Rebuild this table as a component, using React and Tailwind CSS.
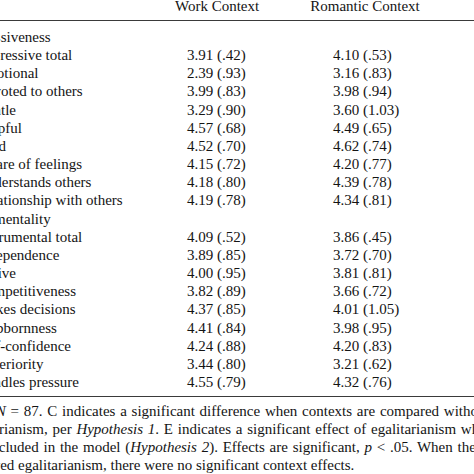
import React from "react";

const rows = [
  { label: "Expressiveness", head: true },
  { label: "Expressive total", work: "3.91 (.42)", rom: "4.10 (.53)" },
  { label: "Emotional", work: "2.39 (.93)", rom: "3.16 (.83)" },
  { label: "Devoted to others", work: "3.99 (.83)", rom: "3.98 (.94)" },
  { label: "Gentle", work: "3.29 (.90)", rom: "3.60 (1.03)" },
  { label: "Helpful", work: "4.57 (.68)", rom: "4.49 (.65)" },
  { label: "Kind", work: "4.52 (.70)", rom: "4.62 (.74)" },
  { label: "Aware of feelings", work: "4.15 (.72)", rom: "4.20 (.77)" },
  { label: "Understands others", work: "4.18 (.80)", rom: "4.39 (.78)" },
  { label: "Relationship with others", work: "4.19 (.78)", rom: "4.34 (.81)" },
  { label: "Instrumentality", head: true },
  { label: "Instrumental total", work: "4.09 (.52)", rom: "3.86 (.45)" },
  { label: "Independence", work: "3.89 (.85)", rom: "3.72 (.70)" },
  { label: "Active", work: "4.00 (.95)", rom: "3.81 (.81)" },
  { label: "Competitiveness", work: "3.82 (.89)", rom: "3.66 (.72)" },
  { label: "Makes decisions", work: "4.37 (.85)", rom: "4.01 (1.05)" },
  { label: "Stubbornness", work: "4.41 (.84)", rom: "3.98 (.95)" },
  { label: "Self-confidence", work: "4.24 (.88)", rom: "4.20 (.83)" },
  { label: "Superiority", work: "3.44 (.80)", rom: "3.21 (.62)" },
  { label: "Handles pressure", work: "4.55 (.79)", rom: "4.32 (.76)" },
];

const App = () => {
  return (
    <div className="w-[474px] h-[474px] overflow-hidden bg-white text-[#141414] font-['Liberation_Serif',serif] text-[15px]">
      <div className="-ml-[41px] w-[560px]">
        {/* column heads */}
        <div className="-mt-[3px] pb-[5px] leading-[18px] flex whitespace-nowrap pl-[216px]">
          <span>Work Context</span>
          <span className="ml-[51px]">Romantic Context</span>
        </div>
        <div className="border-b border-[#3a3a3a]"></div>

        {/* body */}
        <div className="pt-[7px] pb-[5px] leading-[18.16px]">
          {rows.map((r) => (
            <div key={r.label} className="grid grid-cols-[228px_146px_1fr] whitespace-nowrap">
              <div className={r.head ? "" : "pl-[17px]"}>{r.label}</div>
              <div>{r.work}</div>
              <div>{r.rom}</div>
            </div>
          ))}
        </div>
        <div className="border-b border-[#3a3a3a]"></div>

        {/* note */}
        <div className="pt-[5px] leading-[18px] whitespace-nowrap">
          <div className="[word-spacing:1px]">
            <i>Note.</i> <i>N</i> = 87. C indicates a significant difference when contexts are compared without controlling for perceived
          </div>
          <div className="[word-spacing:1px]">
            egalitarianism, per <i>Hypothesis 1</i>. E indicates a significant effect of egalitarianism when perceived
          </div>
          <div className="[word-spacing:1px]">
            was included in the model (<i>Hypothesis 2</i>). Effects are significant, <i>p</i> &lt; .05. When the model included
          </div>
          <div className="-ml-[3px]">perceived egalitarianism, there were no significant context effects.</div>
        </div>
      </div>
    </div>
  );
};

export default App;
